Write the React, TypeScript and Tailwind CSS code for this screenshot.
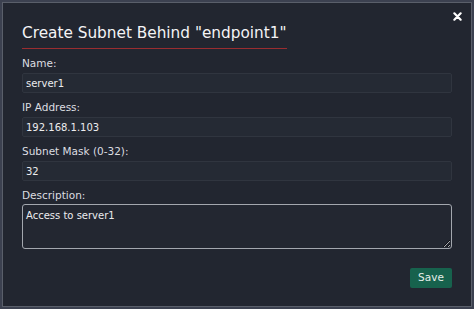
import { useState } from "react";

const FIELDS = [
  { id: "name", label: "Name:", value: "server1" },
  { id: "ip", label: "IP Address:", value: "192.168.1.103" },
  { id: "mask", label: "Subnet Mask (0-32):", value: "32" },
];

export default function App() {
  const [values, setValues] = useState<Record<string, string>>(
    Object.fromEntries(FIELDS.map((f) => [f.id, f.value]))
  );
  const [desc, setDesc] = useState("Access to server1");

  return (
    <div
      className="w-[474px] h-[309px] bg-[#3c4150] p-[2px]"
      style={{ fontFamily: '"DejaVu Sans", Verdana, sans-serif' }}
    >
      <div className="relative h-[305px] bg-[#222630] border border-[#5a5f6a] px-[19px] pt-[18px]">
        {/* Close */}
        <button className="absolute right-[8px] top-[7px] w-[12px] h-[12px] flex items-center justify-center text-white">
          <svg width="9" height="9" viewBox="0 0 10 10">
            <path d="M1.5 1.5 L8.5 8.5 M8.5 1.5 L1.5 8.5" stroke="currentColor" strokeWidth="2.4" strokeLinecap="round" />
          </svg>
        </button>

        {/* Title */}
        <h2 className="inline-block text-[15.3px] leading-[20px] text-[#f4f4f6] pb-[5px] border-b border-[#9a2d30]">
          Create Subnet Behind "endpoint1"
        </h2>

        {/* Fields */}
        <div className="flex flex-col">
          {FIELDS.map((f) => (
            <div key={f.id} className="flex flex-col mt-[7px]">
              <label className="text-[10.5px] leading-[14px] text-[#dcdde0] mb-[3px]">{f.label}</label>
              <input
                value={values[f.id]}
                onChange={(e) => setValues({ ...values, [f.id]: e.target.value })}
                className="h-[20px] w-full bg-[#252a34] border border-[#30353f] rounded-[2px] px-[3px] text-[10px] text-[#ececee] outline-none"
              />
            </div>
          ))}

          <div className="flex flex-col mt-[7px]">
            <label className="text-[10.5px] leading-[14px] text-[#dcdde0] mb-[2px]">Description:</label>
            <textarea
              value={desc}
              onChange={(e) => setDesc(e.target.value)}
              className="h-[45px] w-full bg-[#232731] border border-[#a3a7ae] rounded-[3px] px-[3px] pt-[4px] text-[10px] leading-[14px] text-[#ececee] outline-none block"
            />
          </div>
        </div>

        {/* Footer */}
        <div className="flex justify-end mt-[19px]">
          <button className="w-[42px] h-[20px] bg-[#17624d] rounded-[2px] text-[10.5px] text-[#e4eee9]">
            Save
          </button>
        </div>
      </div>
    </div>
  );
}
